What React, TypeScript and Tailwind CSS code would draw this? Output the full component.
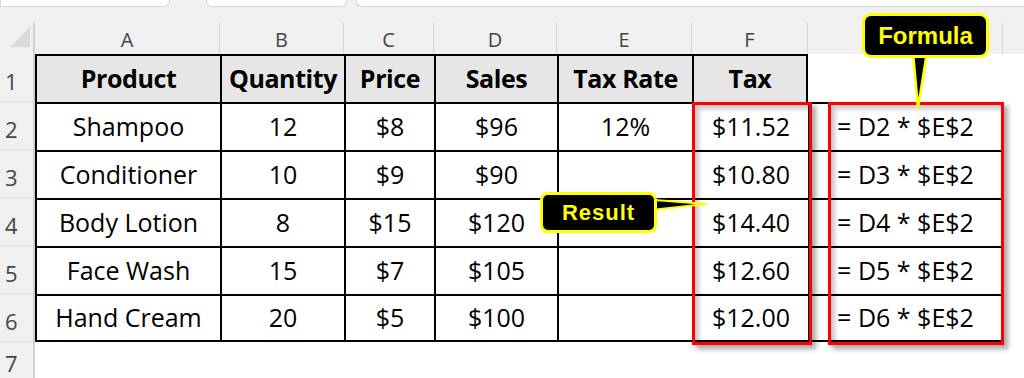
const COLS = 'grid-cols-[35px_185px_124px_90px_123px_135px_116px_195px_1fr]';

const LETTERS = ['A', 'B', 'C', 'D', 'E', 'F', ''];

const HEADERS = ['Product', 'Quantity', 'Price', 'Sales', 'Tax Rate', 'Tax'];

const ROWS = [
  ['Shampoo', '12', '$8', '$96', '12%', '$11.52', '= D2 * $E$2'],
  ['Conditioner', '10', '$9', '$90', '', '$10.80', '= D3 * $E$2'],
  ['Body Lotion', '8', '$15', '$120', '', '$14.40', '= D4 * $E$2'],
  ['Face Wash', '15', '$7', '$105', '', '$12.60', '= D5 * $E$2'],
  ['Hand Cream', '20', '$5', '$100', '', '$12.00', '= D6 * $E$2'],
];

function RowHead({ n, last }: { n: number; last?: boolean }) {
  return (
    <div
      className={`bg-[#f0f0f0] border-r-2 border-[#cfcfcf] flex items-end pl-[5px] text-[22px] leading-none text-[#454545] ${
        last ? 'pb-[8px]' : 'pb-[9px] border-b border-b-[#dcdcdc]'
      }`}
    >
      {n}
    </div>
  );
}

function TopStrip() {
  return (
    <div className="h-[7px] flex bg-[#f0f0f0]">
      <div className="w-[170px] bg-white border border-t-0 border-[#d6d6d6] rounded-br-[6px]" />
      <div className="ml-[36px] w-[141px] bg-white border border-t-0 border-[#d6d6d6] rounded-b-[6px]" />
      <div className="ml-[9px] flex-1 bg-white border border-t-0 border-r-0 border-[#d6d6d6] rounded-bl-[6px]" />
    </div>
  );
}

function ColumnHeads() {
  return (
    <div className={`grid ${COLS} bg-[#f0f0f0] pt-[16px]`}>
      <div className="h-[31px] border-r-2 border-[#d0d0d0] flex items-start pl-[10px] pt-[4px]">
        <svg width="20" height="20" viewBox="0 0 20 20">
          <polygon points="20,0 20,20 0,20" fill="#d9d9d9" />
        </svg>
      </div>
      {LETTERS.map((l, i) => (
        <div
          key={i}
          className="h-[31px] border-r border-[#d6d6d6] flex items-center justify-center text-[20px] text-[#444] pt-[2px]"
        >
          {l}
        </div>
      ))}
      <div className="h-[31px]" />
    </div>
  );
}

function Sheet() {
  return (
    <div className={`grid ${COLS} grid-rows-[48px_48px_48px_48px_48px_48px_40px]`}>
      <RowHead n={1} />
      {HEADERS.map((h, i) => (
        <div
          key={h}
          className={`bg-[#e7e6e6] border-black border-t-2 border-l-2 flex items-center justify-center font-bold text-[25px] tracking-[-0.4px] text-black ${
            i === 5 ? 'border-r-2' : ''
          }`}
        >
          {h}
        </div>
      ))}
      <div className="bg-white" />
      <div className="bg-white" />

      {ROWS.map((row, r) => (
        <RowCells key={r} n={r + 2} row={row} last={r === ROWS.length - 1} />
      ))}

      <RowHead n={7} last />
      <div className="col-span-8 bg-white" />
    </div>
  );
}

function RowCells({ n, row, last }: { n: number; row: string[]; last: boolean }) {
  return (
    <>
      <RowHead n={n} />
      {row.map((v, c) => (
        <div
          key={c}
          className={`bg-white border-black border-t-2 border-l-2 flex items-center justify-center text-[25px] text-black ${
            c === 6 ? 'border-r-2' : ''
          } ${last ? 'border-b-2' : ''}`}
        >
          {v}
        </div>
      ))}
      <div className="bg-white" />
    </>
  );
}

function Callouts() {
  return (
    <>
      {/* highlight boxes */}
      <div className="absolute left-[692px] top-[102px] w-[120px] h-[243px] border-[3px] border-[#ff0000] shadow-[4px_4px_5px_rgba(0,0,0,0.35),inset_4px_4px_5px_rgba(0,0,0,0.22)]" />
      <div className="absolute left-[828px] top-[102px] w-[176px] h-[243px] border-[3px] border-[#ff0000] shadow-[4px_4px_5px_rgba(0,0,0,0.35),inset_4px_4px_5px_rgba(0,0,0,0.22)]" />

      {/* Formula */}
      <svg className="absolute left-[900px] top-[50px]" width="40" height="62" viewBox="0 0 40 62">
        <polygon points="13,2 27,2 18,58" fill="#000" stroke="#ffff00" strokeWidth="2.5" strokeLinejoin="round" />
      </svg>
      <div className="absolute left-[862px] top-[13px] w-[127px] h-[45px] bg-black border-[3px] border-[#ffff00] rounded-[9px] flex items-center justify-center text-[#ffff00] font-bold text-[24px] leading-none font-['Liberation_Sans',Arial,sans-serif]">
        Formula
      </div>

      {/* Result */}
      <svg className="absolute left-[640px] top-[196px]" width="70" height="20" viewBox="0 0 70 20">
        <polygon points="2,3 2,15 66,8" fill="#000" stroke="#ffff00" strokeWidth="2" strokeLinejoin="round" />
      </svg>
      <div className="absolute left-[540px] top-[192px] w-[117px] h-[41px] bg-black border-[3px] border-[#ffff00] rounded-[8px] flex items-center justify-center text-[#ffff00] font-bold text-[22px] tracking-[1px] leading-none font-['Liberation_Sans',Arial,sans-serif]">
        Result
      </div>
    </>
  );
}

export default function App() {
  return (
    <div className="relative w-[1024px] h-[378px] overflow-hidden bg-white font-['Open_Sans',Arial,sans-serif]">
      <TopStrip />
      <ColumnHeads />
      <Sheet />
      <Callouts />
    </div>
  );
}
